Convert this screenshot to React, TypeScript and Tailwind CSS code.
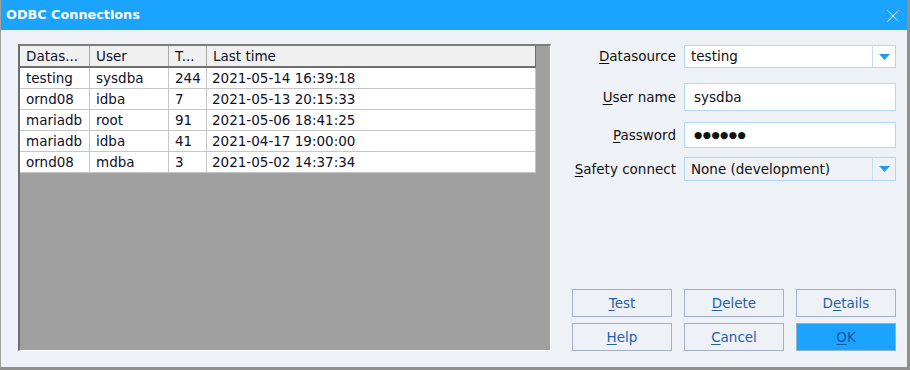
import React from "react";

const rows = [
  { ds: "testing", user: "sysdba", t: "244", last: "2021-05-14 16:39:18" },
  { ds: "ornd08", user: "idba", t: "7", last: "2021-05-13 20:15:33" },
  { ds: "mariadb", user: "root", t: "91", last: "2021-05-06 18:41:25" },
  { ds: "mariadb", user: "idba", t: "41", last: "2021-04-17 19:00:00" },
  { ds: "ornd08", user: "mdba", t: "3", last: "2021-05-02 14:37:34" },
];

function Mn({ pre = "", k, rest }: { pre?: string; k: string; rest: string }) {
  return (
    <span>
      {pre}
      <span className="underline underline-offset-2">{k}</span>
      {rest}
    </span>
  );
}

function Arrow() {
  return (
    <div className="w-[23px] h-full border-l border-[#c4def6] flex items-center justify-center">
      <svg width="11" height="6" viewBox="0 0 11 6">
        <path d="M0 0 L11 0 L5.5 6 Z" fill="#1e9bf0" />
      </svg>
    </div>
  );
}

function Btn({ children, primary }: { children: React.ReactNode; primary?: boolean }) {
  return (
    <div
      className={
        "w-[100px] h-[28px] flex items-center justify-center border text-[13.5px] " +
        (primary
          ? "bg-[#1ba3ff] border-[#8fb2d2] text-[#1d56a3]"
          : "bg-[#eef2f7] border-[#a3afc2] text-[#1f5fae]")
      }
    >
      {children}
    </div>
  );
}

export default function App() {
  return (
    <div
      className="w-[910px] h-[370px] bg-[#8f8f8f] overflow-hidden"
      style={{ fontFamily: '"DejaVu Sans", Verdana, sans-serif' }}
    >
      <div className="w-[907px] h-[367px] flex flex-col bg-[#eef2f7] border-l border-[#a0a0a0]">
        {/* title bar */}
        <div className="h-[30px] shrink-0 bg-[#1aa3ff] flex items-center justify-between pl-[5px] pr-[8px]">
          <span className="text-white font-bold text-[12.8px]">ODBC Connections</span>
          <svg width="12" height="12" viewBox="0 0 12 12" className="mt-[2px]">
            <path d="M0.5 0.5 L11.5 11.5 M11.5 0.5 L0.5 11.5" stroke="#e6f4ff" strokeWidth="1" />
          </svg>
        </div>

        <div className="flex-1 flex pl-[17px] pr-[11px] pt-[14px] pb-[16px] gap-[21px]">
          {/* grid */}
          <div className="w-[533px] h-[307px] bg-[#a0a0a0] border-t-2 border-l-2 border-t-[#7c7c7c] border-l-[#6e6e6e] border-b border-r border-b-white border-r-white">
            <div className="w-[516px] text-[13.5px] text-[#10102a]">
              <div className="flex h-[22px] bg-[#f0f0f0] border-b-2 border-[#6f6f6f] border-r border-r-[#6f6f6f]">
                <div className="w-[70px] pl-[6px] border-r border-[#a8a8a8] flex items-center">Datas...</div>
                <div className="w-[79px] pl-[6px] border-r border-[#a8a8a8] flex items-center">User</div>
                <div className="w-[38px] pl-[6px] border-r border-[#a8a8a8] flex items-center">T...</div>
                <div className="flex-1 pl-[6px] flex items-center">Last time</div>
              </div>
              {rows.map((r, i) => (
                <div key={i} className="flex h-[21px] bg-white border-b border-[#c6c6c6] border-r border-r-[#c6c6c6]">
                  <div className="w-[70px] pl-[6px] border-r border-[#c6c6c6] flex items-center">{r.ds}</div>
                  <div className="w-[79px] pl-[6px] border-r border-[#c6c6c6] flex items-center">{r.user}</div>
                  <div className="w-[38px] pl-[6px] border-r border-[#c6c6c6] flex items-center">{r.t}</div>
                  <div className="flex-1 pl-[5px] flex items-center">{r.last}</div>
                </div>
              ))}
            </div>
          </div>

          {/* right panel */}
          <div className="flex-1 flex flex-col text-[13.5px] text-[#111]">
            <div className="flex items-center gap-[8px] mt-[1px]">
              <div className="w-[104px] text-right"><Mn k="D" rest="atasource" /></div>
              <div className="flex-1 h-[23px] bg-white border border-[#b3d7f7] flex items-center">
                <div className="flex-1 pl-[6px]">testing</div>
                <Arrow />
              </div>
            </div>
            <div className="flex items-center gap-[8px] mt-[15px]">
              <div className="w-[104px] text-right"><Mn k="U" rest="ser name" /></div>
              <div className="flex-1 h-[28px] bg-white border border-[#b3d7f7] flex items-center pl-[9px]">sysdba</div>
            </div>
            <div className="flex items-center gap-[8px] mt-[11px]">
              <div className="w-[104px] text-right"><Mn k="P" rest="assword" /></div>
              <div className="flex-1 h-[26px] bg-white border border-[#b3d7f7] flex items-center pl-[9px]">
                <span className="text-[9.5px] tracking-[0.4px]">●●●●●●</span>
              </div>
            </div>
            <div className="flex items-center gap-[8px] mt-[9px]">
              <div className="w-[104px] text-right whitespace-nowrap"><Mn k="S" rest="afety connect" /></div>
              <div className="flex-1 h-[24px] bg-[#eef2f7] border border-[#b3d7f7] flex items-center">
                <div className="flex-1 pl-[6px]">None (development)</div>
                <Arrow />
              </div>
            </div>

            <div className="mt-auto grid grid-cols-3 gap-x-[12px] gap-y-[6px]">
              <Btn><Mn k="T" rest="est" /></Btn>
              <Btn><Mn k="D" rest="elete" /></Btn>
              <Btn><Mn pre="D" k="e" rest="tails" /></Btn>
              <Btn><Mn k="H" rest="elp" /></Btn>
              <Btn><Mn k="C" rest="ancel" /></Btn>
              <Btn primary><Mn k="O" rest="K" /></Btn>
            </div>
          </div>
        </div>
      </div>
    </div>
  );
}
